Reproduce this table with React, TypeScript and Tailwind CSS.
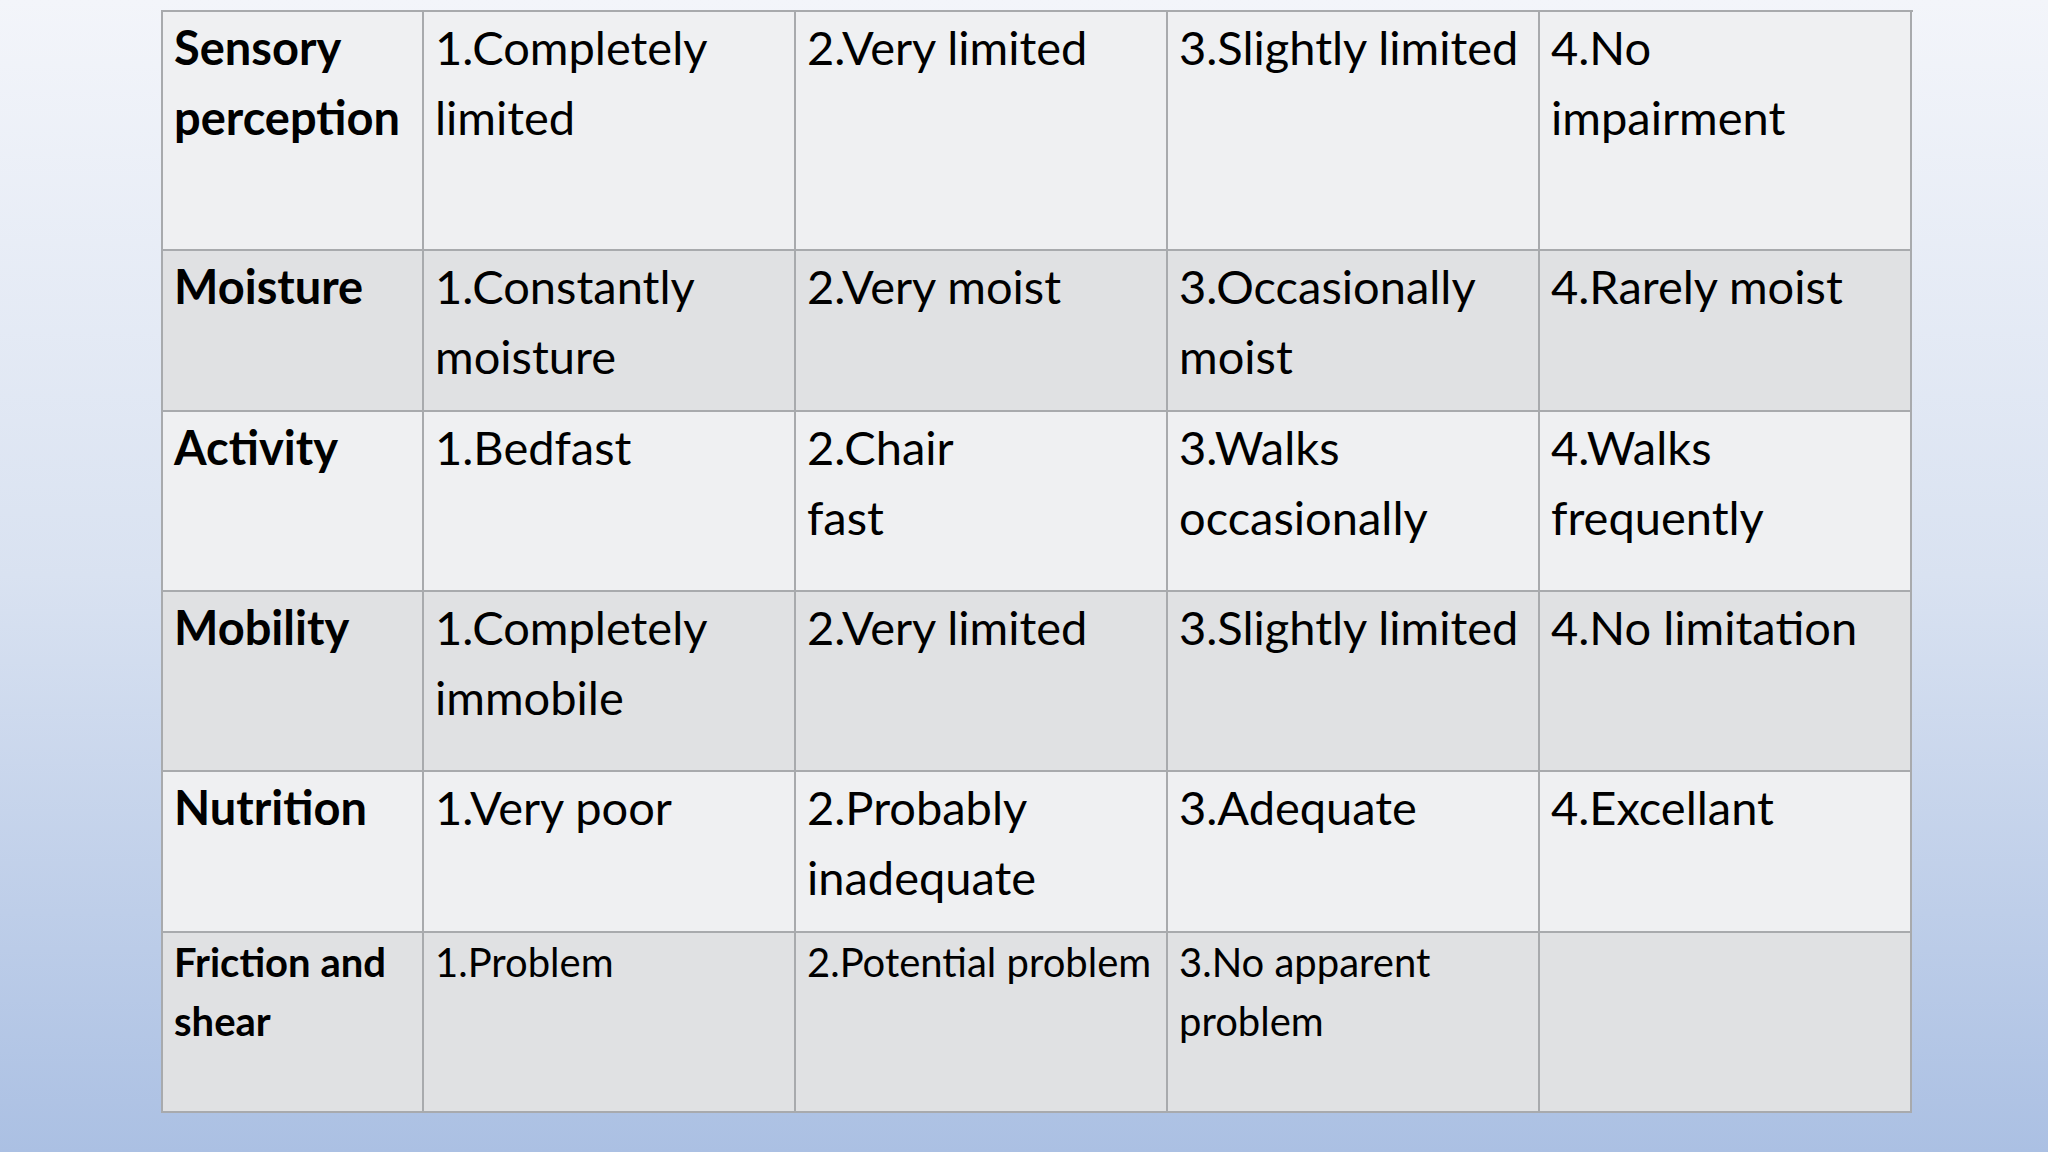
const rows: { label: string[]; cells: string[][]; shade: boolean; small?: boolean; h: string }[] = [
  {
    label: ["Sensory", "perception"],
    cells: [["1.Completely", "limited"], ["2.Very limited"], ["3.Slightly limited"], ["4.No", "impairment"]],
    shade: false,
    h: "h-[239px]",
  },
  {
    label: ["Moisture"],
    cells: [["1.Constantly", "moisture"], ["2.Very moist"], ["3.Occasionally", "moist"], ["4.Rarely moist"]],
    shade: true,
    h: "h-[161px]",
  },
  {
    label: ["Activity"],
    cells: [["1.Bedfast"], ["2.Chair", "fast"], ["3.Walks", "occasionally"], ["4.Walks", "frequently"]],
    shade: false,
    h: "h-[180px]",
  },
  {
    label: ["Mobility"],
    cells: [["1.Completely", "immobile"], ["2.Very limited"], ["3.Slightly limited"], ["4.No limitation"]],
    shade: true,
    h: "h-[180px]",
  },
  {
    label: ["Nutrition"],
    cells: [["1.Very poor"], ["2.Probably", "inadequate"], ["3.Adequate"], ["4.Excellant"]],
    shade: false,
    h: "h-[161px]",
  },
  {
    label: ["Friction and", "shear"],
    cells: [["1.Problem"], ["2.Potential problem"], ["3.No apparent", "problem"], []],
    shade: true,
    small: true,
    h: "h-[180px]",
  },
];

function Lines({ lines }: { lines: string[] }) {
  return (
    <>
      {lines.map((l, i) => (
        <div key={i} className="whitespace-nowrap">
          {l}
        </div>
      ))}
    </>
  );
}

export default function App() {
  return (
    <div className="w-[2048px] h-[1152px] overflow-hidden bg-gradient-to-b from-[#f3f5fa] via-[#d9e2f1] to-[#abc0e3] pt-[10px] pl-[161px] font-['Lato','Noto_Sans',sans-serif] text-black">
      <div className="w-[1752px] border-t-2 border-l-2 border-[#a8aaad] grid grid-cols-[261px_372px_372px_372px_372px]">
        {rows.map((r, ri) => {
          const bg = r.shade ? "bg-[#e0e1e3]" : "bg-[#eff0f2]";
          const txt = r.small
            ? "text-[40px] leading-[59px] pt-0"
            : "text-[47px] leading-[70px] pt-0";
          return [
            <div
              key={`l${ri}`}
              className={`${r.h} ${bg} ${txt} border-r-2 border-b-2 border-[#a8aaad] pl-[11px] font-bold`}
            >
              <Lines lines={r.label} />
            </div>,
            ...r.cells.map((c, ci) => (
              <div
                key={`c${ri}-${ci}`}
                className={`${r.h} ${bg} ${txt} border-r-2 border-b-2 border-[#a8aaad] pl-[11px]`}
              >
                <Lines lines={c} />
              </div>
            )),
          ];
        })}
      </div>
    </div>
  );
}
